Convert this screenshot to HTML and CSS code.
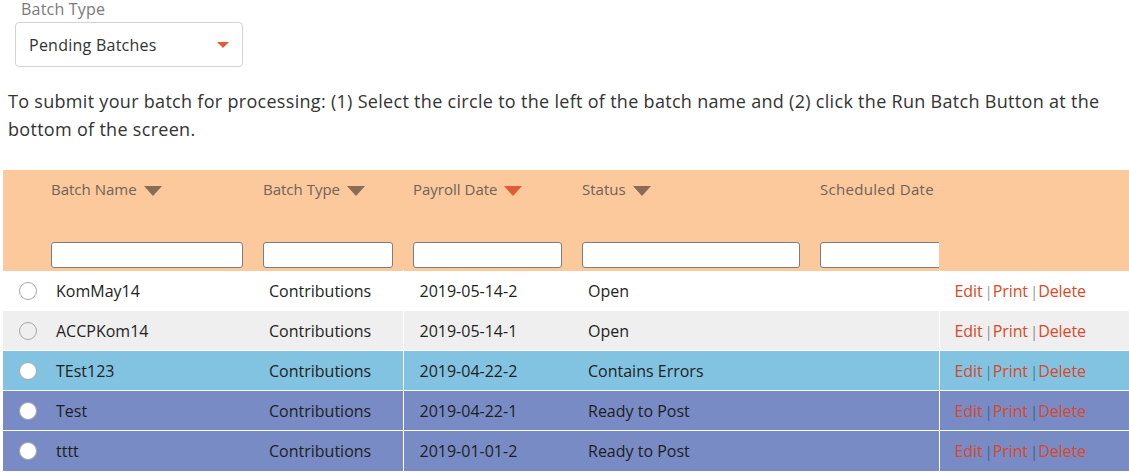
FILE: index.html
```html
<!DOCTYPE html>
<html>
<head>
<meta charset="utf-8">
<link rel="stylesheet" href="styles.css">
</head>
<body>
<div class="page">
  <div class="field">
    <div class="field-label">Batch Type</div>
    <div class="select">
      <span class="select-text">Pending Batches</span>
      <span class="caret caret-active"></span>
    </div>
  </div>
  <p class="intro">To submit your batch for processing: (1) Select the circle to the left of the batch name and (2) click the Run Batch Button at the bottom of the screen.</p>
  <table class="grid">
    <colgroup>
      <col class="c-radio"><col class="c-name"><col class="c-type"><col class="c-pay"><col class="c-status"><col class="c-sched"><col class="c-act">
    </colgroup>
    <thead>
      <tr>
        <th></th>
        <th><div class="th-label">Batch Name <span class="caret"></span></div><input class="filter" type="text"></th>
        <th><div class="th-label">Batch Type <span class="caret"></span></div><input class="filter" type="text"></th>
        <th><div class="th-label">Payroll Date <span class="caret caret-active"></span></div><input class="filter" type="text"></th>
        <th><div class="th-label">Status <span class="caret"></span></div><input class="filter" type="text"></th>
        <th class="th-sched"><div class="th-label">Scheduled Date</div><input class="filter filter-wide" type="text"></th>
        <th></th>
      </tr>
    </thead>
    <tbody>
      <tr class="r-white">
        <td class="td-radio"><span class="radio"></span></td><td>KomMay14</td><td class="sep">Contributions</td><td>2019-05-14-2</td><td>Open</td><td class="sep"></td>
        <td class="actions"><a>Edit</a> <span class="pipe">|</span><a>Print</a> <span class="pipe">|</span><a>Delete</a></td>
      </tr>
      <tr class="r-gray">
        <td class="td-radio"><span class="radio"></span></td><td>ACCPKom14</td><td class="sep">Contributions</td><td>2019-05-14-1</td><td>Open</td><td class="sep"></td>
        <td class="actions"><a>Edit</a> <span class="pipe">|</span><a>Print</a> <span class="pipe">|</span><a>Delete</a></td>
      </tr>
      <tr class="r-error">
        <td class="td-radio"><span class="radio"></span></td><td>TEst123</td><td class="sep">Contributions</td><td>2019-04-22-2</td><td>Contains Errors</td><td class="sep"></td>
        <td class="actions"><a>Edit</a> <span class="pipe">|</span><a>Print</a> <span class="pipe">|</span><a>Delete</a></td>
      </tr>
      <tr class="r-ready">
        <td class="td-radio"><span class="radio"></span></td><td>Test</td><td class="sep">Contributions</td><td>2019-04-22-1</td><td>Ready to Post</td><td class="sep"></td>
        <td class="actions"><a>Edit</a> <span class="pipe">|</span><a>Print</a> <span class="pipe">|</span><a>Delete</a></td>
      </tr>
      <tr class="r-ready">
        <td class="td-radio"><span class="radio"></span></td><td>tttt</td><td class="sep">Contributions</td><td>2019-01-01-2</td><td>Ready to Post</td><td class="sep"></td>
        <td class="actions"><a>Edit</a> <span class="pipe">|</span><a>Print</a> <span class="pipe">|</span><a>Delete</a></td>
      </tr>
    </tbody>
  </table>
</div>
</body>
</html>
```

FILE: styles.css
```css
html, body {
  margin: 0;
  padding: 0;
  background: #ffffff;
}
body {
  font-family: "Open Sans", "Lato", sans-serif;
  color: #2a2a2a;
  overflow: hidden;
}
.page {
  width: 1129px;
}
.field {
  padding-left: 15px;
}
.field-label {
  font-size: 16px;
  line-height: 20px;
  color: #7a7a7a;
  padding-left: 6px;
  margin-top: -1px;
  height: 23px;
  letter-spacing: 0.2px;
}
.select {
  box-sizing: border-box;
  width: 228px;
  height: 45px;
  border: 1px solid #d4d4d4;
  border-radius: 4px;
  display: flex;
  align-items: center;
  justify-content: space-between;
  padding: 0 13px 0 13px;
}
.select-text {
  font-size: 16px;
  color: #333;
  letter-spacing: 0.25px;
}
.caret {
  display: inline-block;
  width: 0;
  height: 0;
  border-left: 9px solid transparent;
  border-right: 9px solid transparent;
  border-top: 10px solid #8a6b55;
  vertical-align: middle;
  margin-left: 3px;
}
.select .caret {
  border-left-width: 6px;
  border-right-width: 6px;
  border-top-width: 6px;
}
.caret-active {
  border-top-color: #e05c36;
}
.intro {
  margin: 20px 0 0 8px;
  font-size: 18px;
  line-height: 28px;
  color: #333;
  width: 1115px;
  letter-spacing: 0.3px;
}
.grid {
  margin: 27px 0 0 3px;
  border-collapse: collapse;
  table-layout: fixed;
  width: 1126px;
}
.c-radio { width: 38px; }
.c-name { width: 212px; }
.c-type { width: 150px; }
.c-pay { width: 169px; }
.c-status { width: 238px; }
.c-sched { width: 129px; }
.c-act { width: 190px; }
.grid thead tr {
  background: #fcc99c;
}
.grid th {
  height: 100px;
  box-sizing: border-box;
  padding: 9px 10px 2px 10px;
  vertical-align: top;
  text-align: left;
  font-weight: normal;
  overflow: hidden;
}
.th-label {
  font-size: 15px;
  line-height: 20px;
  color: #6e625a;
  white-space: nowrap;
  height: 63px;
}
.th-sched .th-label {
  letter-spacing: 0.3px;
}
.th-sched {
  padding-right: 0;
}
.filter {
  display: block;
  box-sizing: border-box;
  width: 100%;
  height: 26px;
  margin: 0;
  border: 1px solid #7d7d7d;
  border-radius: 3px;
  background: #fff;
}
.filter-wide {
  width: 160px;
}
.grid tbody tr {
  height: 40px;
  border-top: 1px solid #fff;
}
.grid tbody tr.r-white {
  border-top: 1px solid #fcc99c;
}
.grid td {
  padding: 0 0 0 15px;
  font-size: 16px;
  color: #1e1e1e;
  white-space: nowrap;
  vertical-align: middle;
  overflow: hidden;
}
.grid td:nth-child(3),
.grid td:nth-child(4),
.grid td:nth-child(5) {
  padding-left: 16px;
}
.grid td.sep {
  border-right: 1px solid #fff;
}
.grid td.td-radio {
  padding-left: 16px;
}
.r-white { background: #ffffff; }
.r-gray { background: #efefef; }
.r-error { background: #82c3e1; }
.r-ready { background: #788bc5; }
.radio {
  display: block;
  box-sizing: border-box;
  width: 18px;
  height: 18px;
  border-radius: 50%;
  border: 1px solid #a8a8a8;
  background: #fff;
}
.r-white .radio, .r-gray .radio {
  background: transparent;
}
.actions {
  word-spacing: -2px;
  letter-spacing: -0.1px;
}
.actions a {
  color: #d9482a;
}
.pipe {
  color: rgba(40, 50, 50, 0.55);
  font-size: 15px;
}
```
